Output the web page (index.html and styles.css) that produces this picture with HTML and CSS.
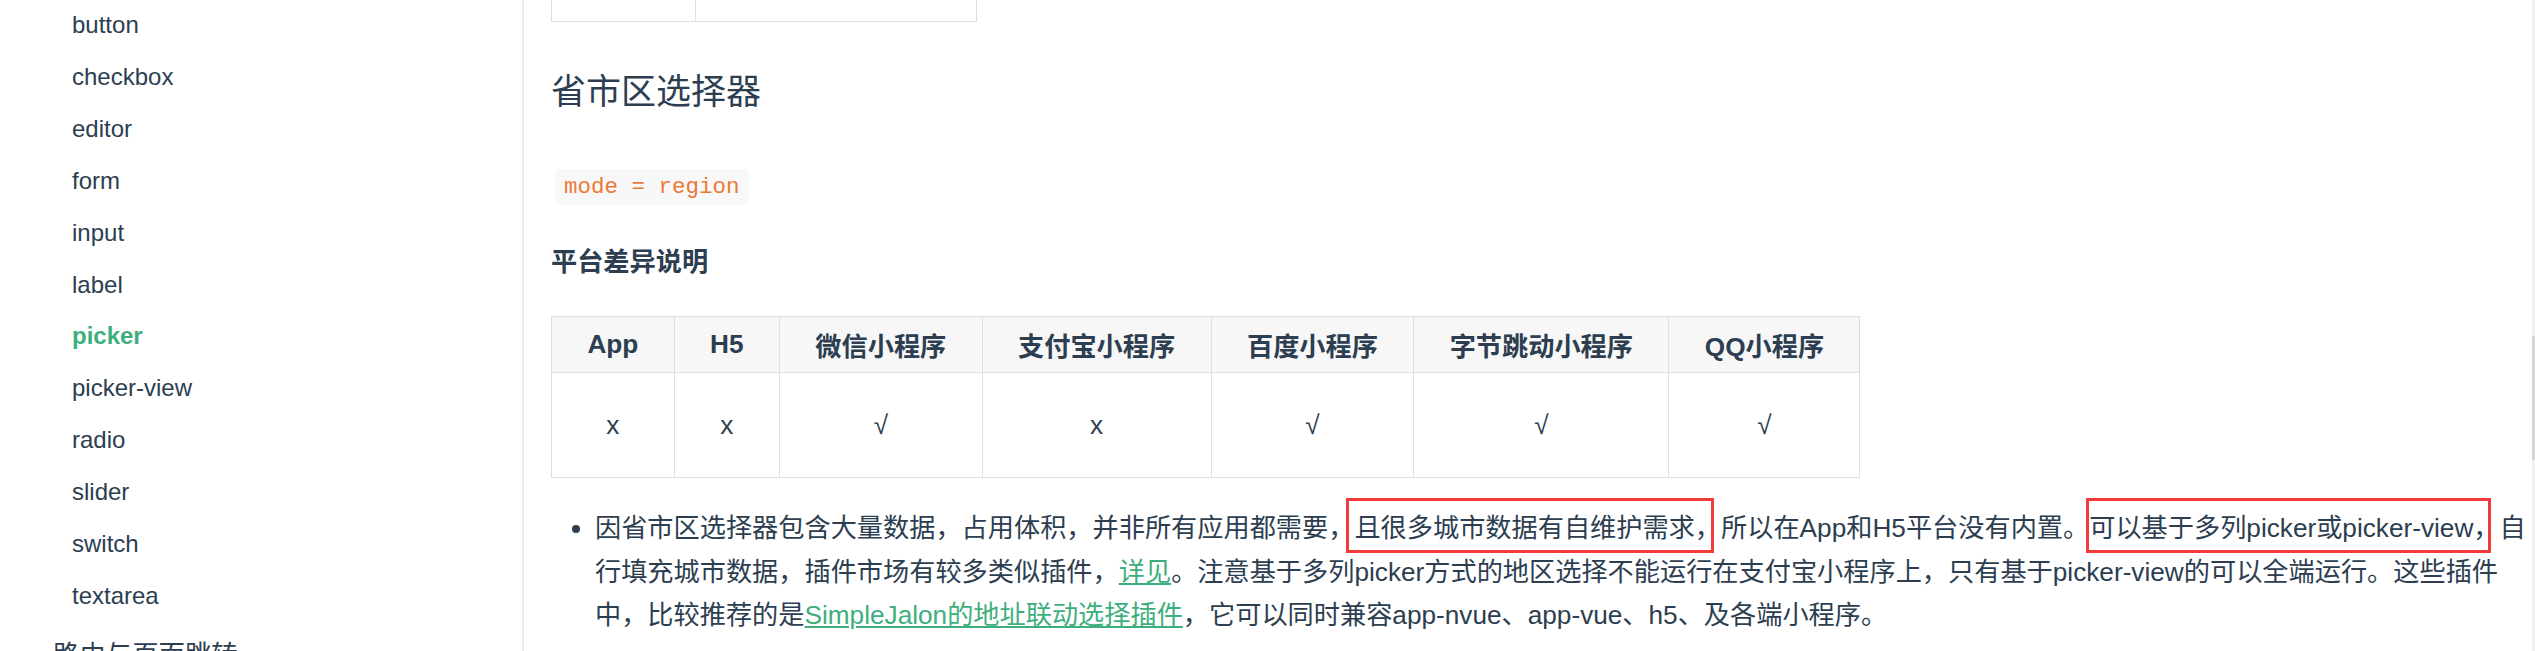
FILE: index.html
```html
<!DOCTYPE html>
<html lang="zh-CN">
<head>
    <meta charset="UTF-8">
    <meta name="viewport" content="width=device-width, initial-scale=1.0">
    <title>picker | uni-app</title>
    <link rel="stylesheet" href="styles.css">
</head>
<body>

    <div class="layout">
        <aside class="sidebar">
            <ul class="sidebar-links">
                <li><a class="sidebar-link" href="#">button</a></li>
                <li><a class="sidebar-link" href="#">checkbox</a></li>
                <li><a class="sidebar-link" href="#">editor</a></li>
                <li><a class="sidebar-link" href="#">form</a></li>
                <li><a class="sidebar-link" href="#">input</a></li>
                <li><a class="sidebar-link" href="#">label</a></li>
                <li><a class="sidebar-link active" href="#">picker</a></li>
                <li><a class="sidebar-link" href="#">picker-view</a></li>
                <li><a class="sidebar-link" href="#">radio</a></li>
                <li><a class="sidebar-link" href="#">slider</a></li>
                <li><a class="sidebar-link" href="#">switch</a></li>
                <li><a class="sidebar-link" href="#">textarea</a></li>
            </ul>
            <p class="sidebar-heading">路由与页面跳转</p>
        </aside>

        <main class="page">
            <!-- 上一节表格的末尾 -->
            <table class="prev-table">
                <tr><td class="col-a"></td><td class="col-b"></td></tr>
            </table>

            <h3>省市区选择器</h3>
            <p class="code-line"><code>mode = region</code></p>

            <h4>平台差异说明</h4>
            <table class="diff-table">
                <thead>
                    <tr>
                        <th>App</th>
                        <th>H5</th>
                        <th>微信小程序</th>
                        <th>支付宝小程序</th>
                        <th>百度小程序</th>
                        <th>字节跳动小程序</th>
                        <th>QQ小程序</th>
                    </tr>
                </thead>
                <tbody>
                    <tr>
                        <td>x</td>
                        <td>x</td>
                        <td>√</td>
                        <td>x</td>
                        <td>√</td>
                        <td>√</td>
                        <td>√</td>
                    </tr>
                </tbody>
            </table>

            <ul class="notes">
                <li>因省市区选择器包含大量数据，占用体积，并非所有应用都需要，<span class="mark mark-1">且很多城市数据有自维护需求，</span>所以在App和H5平台没有内置。<span class="mark mark-2">可以基于多列picker或picker-view，</span>自行填充城市数据，插件市场有较多类似插件，<a href="#">详见</a>。注意基于多列picker方式的地区选择不能运行在支付宝小程序上，只有基于picker-view的可以全端运行。这些插件中，比较推荐的是<a href="#">SimpleJalon的地址联动选择插件</a>，它可以同时兼容app-nvue、app-vue、h5、及各端小程序。</li>
            </ul>
        </main>

        <div class="scrollbar"><div class="scrollbar-thumb"></div></div>
    </div>

</body>
</html>
```

FILE: styles.css
```css
html, body {
    margin: 0;
    height: 651px;
    overflow: hidden;
}
body {
    font-family: "Liberation Sans", "Noto Sans CJK SC", sans-serif;
    color: #2c3e50;
    background: #fff;
}
.layout {
    display: flex;
    height: 651px;
}

/* 侧边栏 */
.sidebar {
    flex: none;
    width: 522px;
    border-right: 2px solid #eaecef;
}
.sidebar-links {
    list-style: none;
    margin: -1px 0 0;
    padding: 0;
}
.sidebar-link {
    display: block;
    padding-left: 72px;
    font-size: 24px;
    line-height: 51.9px;
    color: #2c3e50;
    text-decoration: none;
}
.sidebar-link.active {
    color: #3eaf7c;
    font-weight: 700;
}
.sidebar-heading {
    margin: 15px 0 0;
    padding-left: 53px;
    font-size: 26.4px;
    line-height: 37px;
}

/* 正文 */
.page {
    flex: 1;
    min-width: 0;
    padding: 0 2px 0 27px;
}
.prev-table {
    border-collapse: collapse;
}
.prev-table td {
    height: 21px;
    padding: 0;
    border: 1px solid #dfdfdf;
    border-top: none;
}
.prev-table .col-a {
    width: 143px;
}
.prev-table .col-b {
    width: 280px;
}
h3 {
    margin: 48px 0 0;
    font-size: 35px;
    font-weight: 400;
    line-height: 44px;
}
.code-line {
    margin: 55px 0 0;
    line-height: 36px;
}
code {
    display: inline-block;
    vertical-align: top;
    margin-left: 4px;
    padding: 5px 9px;
    font-family: "Liberation Mono", monospace;
    font-size: 22.5px;
    line-height: 26px;
    color: #ec7a36;
    background-color: #f8f8f8;
    border-radius: 5px;
}
h4 {
    margin: 39px 0 0;
    font-size: 26.2px;
    font-weight: 700;
    line-height: 36px;
}
.diff-table {
    margin-top: 36px;
    border-collapse: collapse;
    font-size: 26.2px;
}
.diff-table th, .diff-table td {
    padding: 0 35.4px;
    border: 1px solid #dfdfdf;
    text-align: center;
}
.diff-table th {
    height: 55px;
    font-weight: 700;
    background-color: #f7f7f7;
}
.diff-table td {
    height: 104px;
}
.notes {
    margin: 29px 0 0;
    padding-left: 44px;
    font-size: 26.2px;
    line-height: 43.5px;
}
.notes a {
    color: #3eaf7c;
    text-decoration: underline;
}

/* 截图上的红色标注框 */
.mark {
    position: relative;
}
.mark::after {
    content: "";
    position: absolute;
    top: -15px;
    bottom: -10px;
    border: 3px solid #f23a3a;
}
.mark-1::after {
    left: -8px;
    right: 7px;
}
.mark-2::after {
    left: -3px;
    right: 9px;
}

.scrollbar {
    flex: none;
    width: 3px;
    background-color: #f1f1f1;
}
.scrollbar-thumb {
    margin-top: 336px;
    height: 124px;
    background-color: #d6d6d6;
}
```
